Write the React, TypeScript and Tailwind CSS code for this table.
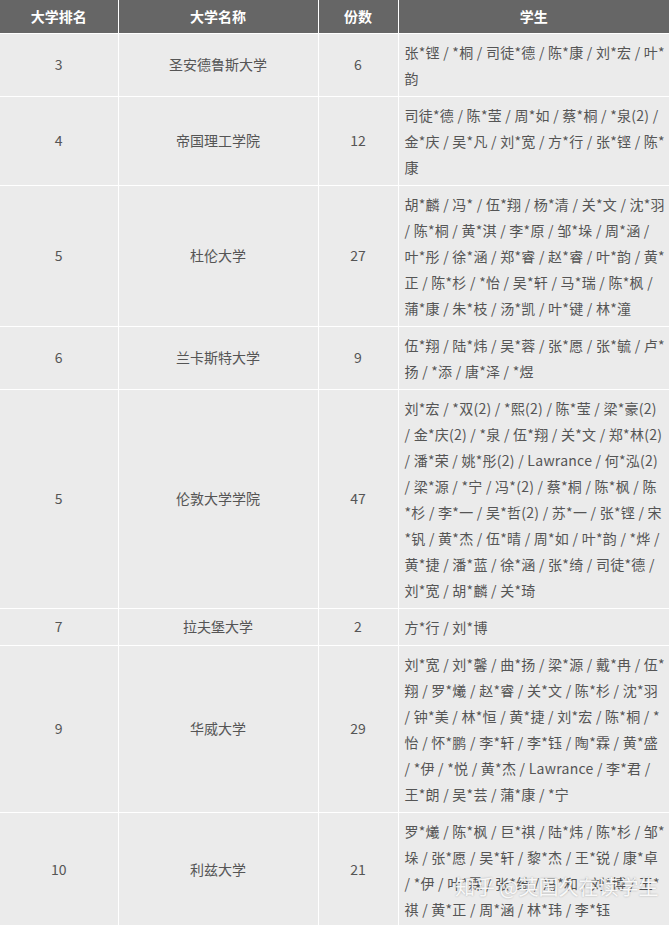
import React from "react"

interface Row {
  rank: string
  name: string
  count: string
  lines: string[]
}

const rows: Row[] = [
  {
    rank: "3",
    name: "圣安德鲁斯大学",
    count: "6",
    lines: ["张*铿 / *桐 / 司徒*德 / 陈*康 / 刘*宏 / 叶*", "韵"],
  },
  {
    rank: "4",
    name: "帝国理工学院",
    count: "12",
    lines: [
      "司徒*德 / 陈*莹 / 周*如 / 蔡*桐 / *泉(2) /",
      "金*庆 / 吴*凡 / 刘*宽 / 方*行 / 张*铿 / 陈*",
      "康",
    ],
  },
  {
    rank: "5",
    name: "杜伦大学",
    count: "27",
    lines: [
      "胡*麟 / 冯* / 伍*翔 / 杨*清 / 关*文 / 沈*羽",
      "/ 陈*桐 / 黄*淇 / 李*原 / 邹*垛 / 周*涵 /",
      "叶*彤 / 徐*涵 / 郑*睿 / 赵*睿 / 叶*韵 / 黄*",
      "正 / 陈*杉 / *怡 / 吴*轩 / 马*瑞 / 陈*枫 /",
      "蒲*康 / 朱*枝 / 汤*凯 / 叶*键 / 林*潼",
    ],
  },
  {
    rank: "6",
    name: "兰卡斯特大学",
    count: "9",
    lines: ["伍*翔 / 陆*炜 / 吴*蓉 / 张*愿 / 张*毓 / 卢*", "扬 / *添 / 唐*泽 / *煜"],
  },
  {
    rank: "5",
    name: "伦敦大学学院",
    count: "47",
    lines: [
      "刘*宏 / *双(2) / *熙(2) / 陈*莹 / 梁*豪(2)",
      "/ 金*庆(2) / *泉 / 伍*翔 / 关*文 / 郑*林(2)",
      "/ 潘*荣 / 姚*彤(2) / Lawrance / 何*泓(2)",
      "/ 梁*源 / *宁 / 冯*(2) / 蔡*桐 / 陈*枫 / 陈",
      "*杉 / 李*一 / 吴*哲(2) / 苏*一 / 张*铿 / 宋",
      "*钒 / 黄*杰 / 伍*晴 / 周*如 / 叶*韵 / *烨 /",
      "黄*捷 / 潘*蓝 / 徐*涵 / 张*绮 / 司徒*德 /",
      "刘*宽 / 胡*麟 / 关*琦",
    ],
  },
  {
    rank: "7",
    name: "拉夫堡大学",
    count: "2",
    lines: ["方*行 / 刘*博"],
  },
  {
    rank: "9",
    name: "华威大学",
    count: "29",
    lines: [
      "刘*宽 / 刘*馨 / 曲*扬 / 梁*源 / 戴*冉 / 伍*",
      "翔 / 罗*爔 / 赵*睿 / 关*文 / 陈*杉 / 沈*羽",
      "/ 钟*美 / 林*恒 / 黄*捷 / 刘*宏 / 陈*桐 / *",
      "怡 / 怀*鹏 / 李*轩 / 李*钰 / 陶*霖 / 黄*盛",
      "/ *伊 / *悦 / 黄*杰 / Lawrance / 李*君 /",
      "王*朗 / 吴*芸 / 蒲*康 / *宁",
    ],
  },
  {
    rank: "10",
    name: "利兹大学",
    count: "21",
    lines: [
      "罗*爔 / 陈*枫 / 巨*祺 / 陆*炜 / 陈*杉 / 邹*",
      "垛 / 张*愿 / 吴*轩 / 黎*杰 / 王*锐 / 康*卓",
      "/ *伊 / 叶*霖 / 张*绮 / 冯*和 / 刘*博 / 王*",
      "祺 / 黄*正 / 周*涵 / 林*玮 / 李*钰",
    ],
  },
]

export default function App() {
  return (
    <div
      className="relative w-[669px] overflow-hidden bg-white text-[14px] text-[#555]"
      style={{ fontFamily: '"Microsoft YaHei", "Noto Sans CJK SC", "Noto Sans", sans-serif' }}
    >
      <table className="w-[669px] table-fixed border-collapse">
        <colgroup>
          <col className="w-[118px]" />
          <col className="w-[200px]" />
          <col className="w-[80px]" />
          <col className="w-[271px]" />
        </colgroup>
        <thead>
          <tr className="h-[33px] bg-[#666] text-white">
            <th className="border border-white border-t-0 border-l-0 font-bold">大学排名</th>
            <th className="border border-white border-t-0 font-bold">大学名称</th>
            <th className="border border-white border-t-0 font-bold">份数</th>
            <th className="border border-white border-t-0 border-r-0 font-bold">学生</th>
          </tr>
        </thead>
        <tbody>
          {rows.map((row, i) => (
            <tr key={i} className="bg-[#ebebeb]">
              <td className="border border-white border-l-0 text-center align-middle">{row.rank}</td>
              <td className="border border-white text-center align-middle">{row.name}</td>
              <td className="border border-white text-center align-middle">{row.count}</td>
              <td className="border border-white border-r-0 pt-[5px] pb-[5px] pl-[6px] align-top tracking-[0.26px]">
                {row.lines.map((line, j) => (
                  <div key={j} className="h-[26px] whitespace-nowrap leading-[26px]">
                    {line}
                  </div>
                ))}
              </td>
            </tr>
          ))}
        </tbody>
      </table>
      <div className="pointer-events-none absolute left-[455px] top-[877px] whitespace-nowrap text-[20px] leading-none text-white/90 [text-shadow:0_0_2px_rgba(0,0,0,0.3)]">
        知乎 @英国久在读学生
      </div>
    </div>
  )
}
